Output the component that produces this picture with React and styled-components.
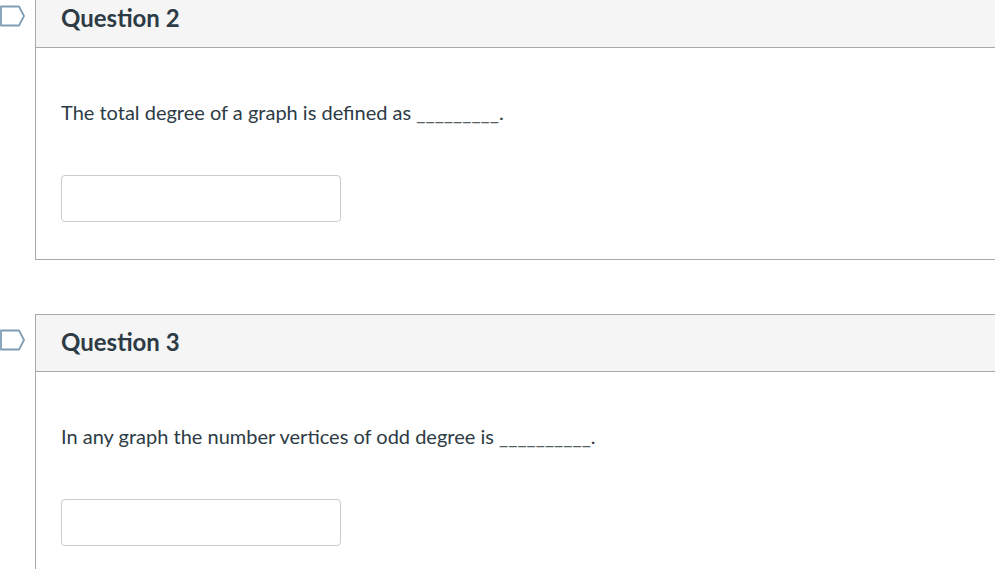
import React from "react";
import styled, { createGlobalStyle } from "styled-components";

const GlobalStyle = createGlobalStyle`
  html, body {
    margin: 0;
    padding: 0;
    background: #ffffff;
    overflow: hidden;
  }
  body {
    font-family: Lato, "Open Sans", "Liberation Sans", sans-serif;
    color: #2d3b45;
  }
`;

const Page = styled.div`
  display: flex;
  flex-direction: column;
  gap: 54px;
  margin-top: -10px;
`;

const QuestionRow = styled.div`
  display: flex;
  align-items: flex-start;
`;

const Gutter = styled.div`
  width: 35px;
  flex: none;
  display: flex;
  padding-top: 15px;
`;

const Panel = styled.div`
  flex: 1;
  margin-right: -20px;
  border: 1px solid #a9a9a9;
  border-right: none;
  background: #fff;
`;

const Header = styled.div`
  height: 56px;
  display: flex;
  align-items: center;
  padding-left: 25px;
  background: #f5f5f5;
  border-bottom: 1px solid #a9a9a9;
`;

const Title = styled.h2`
  margin: 0 0 2px;
  font-size: 24px;
  line-height: 30px;
  font-weight: 700;
  color: #2d3b45;
`;

const Body = styled.div`
  padding: 51px 25px 37px;
`;

const Text = styled.p`
  margin: 0 0 49px;
  font-size: 20px;
  line-height: 27px;
  color: #2d3b45;
`;

const Blank = styled.span`
  color: #555f66;
`;

const Answer = styled.input`
  display: block;
  box-sizing: border-box;
  width: 280px;
  height: 47px;
  margin: 0;
  border: 1px solid #c7cdd1;
  border-radius: 4px;
  background: #fff;
  outline: none;
`;

const Flag = () => (
  <svg width="26" height="22" viewBox="0 0 26 22">
    <path
      d="M1 1.5 H19 L24 11 L19 20.5 H1 Z"
      fill="#fff"
      stroke="#7f9db7"
      strokeWidth="1.8"
      strokeLinejoin="round"
    />
  </svg>
);

const Question = ({ number, text, blank }) => (
  <QuestionRow>
    <Gutter>
      <Flag />
    </Gutter>
    <Panel>
      <Header>
        <Title>Question {number}</Title>
      </Header>
      <Body>
        <Text>
          {text} <Blank>{blank}</Blank>.
        </Text>
        <Answer type="text" />
      </Body>
    </Panel>
  </QuestionRow>
);

export default function App() {
  return (
    <>
      <GlobalStyle />
      <Page>
        <Question
          number={2}
          text="The total degree of a graph is defined as"
          blank="_________"
        />
        <Question
          number={3}
          text="In any graph the number vertices of odd degree is"
          blank="__________"
        />
      </Page>
    </>
  );
}
